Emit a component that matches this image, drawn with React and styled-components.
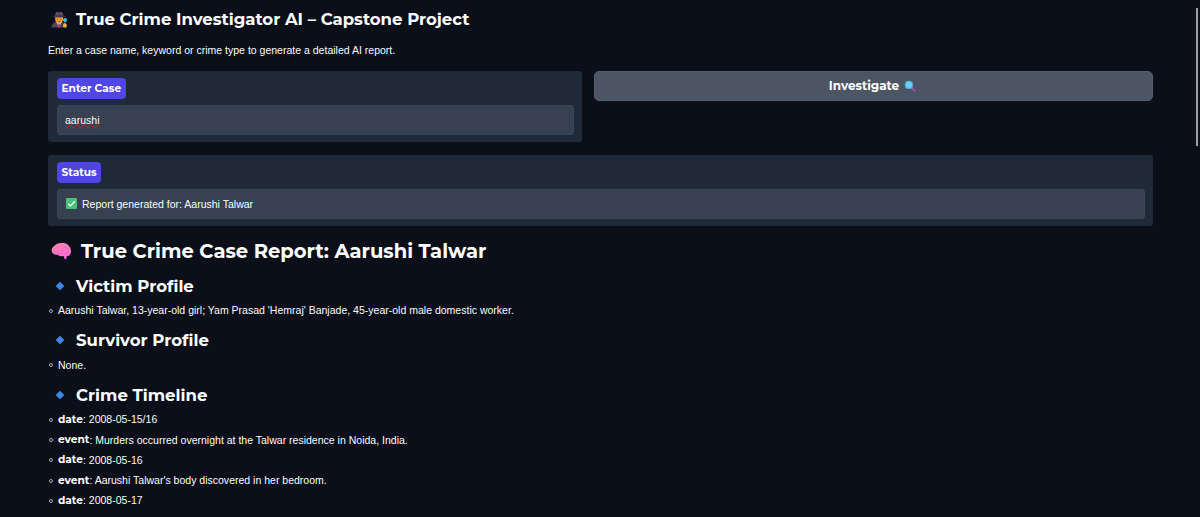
import styled, { createGlobalStyle } from 'styled-components';

const colors = {
  bg: '#0b0f19',
  block: '#1f2937',
  field: '#374151',
  button: '#4b5563',
  label: '#4f46e5',
  text: '#fbfcfd',
  muted: '#a3a9b3',
};

const body = `'Liberation Sans', Arial, sans-serif`;
const display = `Montserrat, Inter, sans-serif`;

const GlobalStyle = createGlobalStyle`
  *, *::before {
    box-sizing: border-box;
  }
  body {
    margin: 0;
    height: 517px;
    overflow: hidden;
    background: ${colors.bg};
    color: ${colors.text};
    font: 10.53px/16px ${body};
  }
`;

const Page = styled.main`
  height: 517px;
  padding: 7px 47px 0 48px;
  overflow: hidden;
`;

const Scrollbar = styled.div`
  position: fixed;
  top: 8px;
  right: 2px;
  width: 2px;
  height: 138px;
  background: #9f9fa1;
`;

const Heading = styled.h2`
  display: flex;
  align-items: center;
  height: 24px;
  margin: ${p => p.$margin || '0'};
  color: #fff;
  font: 700 ${p => p.$size || 16.52}px/24px ${display};
  white-space: nowrap;
  svg {
    flex: none;
    margin: ${p => p.$icon || '0 8px 0 3px'};
  }
`;

const Intro = styled.p`
  margin: 11px 0 13px;
`;

const Row = styled.div`
  display: grid;
  grid-template-columns: 534px 559px;
  justify-content: space-between;
  align-items: start;
  margin-bottom: 12.5px;
`;

const Block = styled.section`
  height: 71px;
  padding: 7px 8.5px 7px 9px;
  border-radius: 3px;
  background: ${colors.block};
`;

const Label = styled.div`
  width: fit-content;
  height: 21px;
  padding: 0 4.5px;
  border-radius: 4px;
  background: ${colors.label};
  color: #fff;
  font: 700 10.6px/21px ${display};
  white-space: nowrap;
`;

const Field = styled.div`
  display: flex;
  align-items: center;
  height: 30px;
  margin-top: 6px;
  padding: 0 7px;
  border: 1px solid #3b4657;
  border-radius: 3px;
  background: ${colors.field};
  svg {
    margin: 0 5px 0 1px;
  }
`;

const Misspelled = styled.span`
  text-decoration: underline wavy #e8101c 1px;
  text-decoration-skip-ink: none;
  text-underline-offset: 0;
`;

const Button = styled.button`
  display: flex;
  align-items: center;
  justify-content: center;
  height: 30px;
  padding: 0 2px 0 0;
  border: 1px solid #535e6d;
  border-radius: 5px;
  background: ${colors.button};
  color: #fff;
  font: 700 12.03px/28px ${display};
  svg {
    margin-left: 5px;
  }
`;

const List = styled.ul`
  margin: 0;
  padding: 0;
  list-style: none;
`;

const Item = styled.li`
  display: flex;
  align-items: center;
  height: 20.3px;
  white-space: pre;
  &::before {
    content: '';
    width: 4px;
    height: 4px;
    margin: 1px 5px 0 1px;
    border: 1px solid ${colors.muted};
    border-radius: 50%;
  }
  strong {
    padding-top: 1px;
    color: #fff;
    font: 700 10.6px/16px ${display};
  }
`;

const Detective = () => (
  <svg width="17" height="17" viewBox="0 0 17 17">
    <path d="M0.5 16.5Q1 11.5 5 11H11Q14 12 14.5 16.5Z" fill="#55435e" />
    <path d="M4.2 5H12V9Q11 12.4 8 12.4Q5 12.4 4.2 9Z" fill="#f5a32b" />
    <path d="M5.5 11L8 16.5L10.6 11L8 12.6Z" fill="#d9d6df" />
    <path d="M7.3 12.5H8.8L9.2 16.5H7Z" fill="#c33a52" />
    <path d="M4 5.2Q4.3 0.8 6 0.7Q8 1.7 10 0.7Q12 0.8 12.4 5.2Z" fill="#5d4b69" />
    <path d="M1.5 5.1Q8 3 14.8 5.1Q14 6.7 8 6.4Q2.5 6.7 1.5 5.1Z" fill="#453653" />
    <path d="M6 8H7M9.4 8H10.4M6.8 10.4H9.4" stroke="#65402c" strokeWidth="0.8" />
    <circle cx="14" cy="9" r="2" fill="#45b9ee" />
    <path d="M14 11V13" stroke="#a35ad0" strokeWidth="1.2" />
    <rect x="12.2" y="12.5" width="3.5" height="4" rx="1.2" fill="#f7b52e" />
  </svg>
);

const Brain = () => (
  <svg width="21" height="18" viewBox="0 0 21 18">
    <defs>
      <linearGradient id="brain" x1="0" y1="0" x2="0.2" y2="1">
        <stop offset="0" stopColor="#ff8fb0" />
        <stop offset="1" stopColor="#ff68dc" />
      </linearGradient>
    </defs>
    <path d="M1 10Q-0.3 6.4 3.3 3.7Q6.7 0.3 11 1Q15.5 0.6 18 4Q20.8 7.1 19.8 11Q18.8 14.2 15.6 14.3L15.4 17.2L13.5 16.7L12.8 14.1Q9 14.8 6.5 12.7Q2.4 13.2 1 10Z" fill="url(#brain)" />
    <path d="M4 6.5Q6 3.5 8.2 4.6M9 2.5Q12 2 13.5 4.3M11 6Q14.2 4.2 17.4 7M3.2 9.6Q6 10.8 8.4 8.3Q11.4 7.2 13 9M7 12Q11 12.5 12 10.2M14 11.5Q17 11.6 18 9.5" fill="none" stroke="#e85aa9" strokeWidth="0.7" strokeLinecap="round" />
  </svg>
);

const Diamond = () => (
  <svg width="10" height="10" viewBox="0 0 10 10">
    <path d="M5 0.9L9.1 5L5 9.1L0.9 5Z" fill="#3f87e5" stroke="#3f87e5" strokeWidth="0.6" strokeLinejoin="round" />
  </svg>
);

const Check = () => (
  <svg width="11" height="11" viewBox="0 0 11 11">
    <rect width="11" height="11" rx="1" fill="#43c478" />
    <path d="M2.3 5.7L4.5 7.9L8.9 3.3" fill="none" stroke="#fff" strokeWidth="1.3" />
  </svg>
);

const Magnifier = () => (
  <svg width="12" height="12" viewBox="0 0 12 12">
    <path d="M7.7 7.8L10.4 10.5" stroke="#a04fa8" strokeWidth="2.2" strokeLinecap="round" />
    <circle cx="4.9" cy="4.9" r="3.9" fill="#62d1f3" stroke="#46a9d7" strokeWidth="0.8" />
  </svg>
);

const Section = ({ title, children }) => (
  <>
    <Heading $margin="7.8px 0 2.3px" $icon="0 11px 0 7px">
      <Diamond />
      {title}
    </Heading>
    <List>{children}</List>
  </>
);

const timeline = [
  ['date', '2008-05-15/16'],
  ['event', 'Murders occurred overnight at the Talwar residence in Noida, India.'],
  ['date', '2008-05-16'],
  ['event', "Aarushi Talwar's body discovered in her bedroom."],
  ['date', '2008-05-17'],
];

const App = () => (
  <Page>
    <GlobalStyle />
    <Heading as="h1">
      <Detective />
      True Crime Investigator AI – Capstone Project
    </Heading>
    <Intro>Enter a case name, keyword or crime type to generate a detailed AI report.</Intro>
    <Row>
      <Block>
        <Label>Enter Case</Label>
        <Field><Misspelled>aarushi</Misspelled></Field>
      </Block>
      <Button>Investigate <Magnifier /></Button>
    </Row>
    <Block>
      <Label>Status</Label>
      <Field><Check />Report generated for: Aarushi Talwar</Field>
    </Block>
    <Heading as="h1" $size={19.55} $margin="13.3px 0 11.2px" $icon="0 9px 0 3px">
      <Brain />
      True Crime Case Report: Aarushi Talwar
    </Heading>
    <Section title="Victim Profile">
      <Item>Aarushi Talwar, 13-year-old girl; Yam Prasad 'Hemraj' Banjade, 45-year-old male domestic worker.</Item>
    </Section>
    <Section title="Survivor Profile">
      <Item>None.</Item>
    </Section>
    <Section title="Crime Timeline">
      {timeline.map(([key, value], i) => (
        <Item key={i}><strong>{key}</strong>: {value}</Item>
      ))}
    </Section>
    <Scrollbar />
  </Page>
);

export default App;
